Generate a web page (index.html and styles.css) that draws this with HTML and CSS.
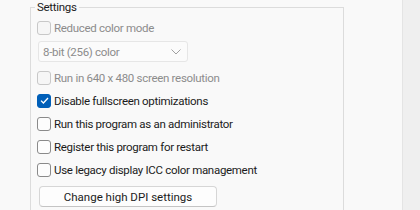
FILE: index.html
```html
<!DOCTYPE html>
<html lang="en">
<head>
  <meta charset="UTF-8">
  <title>Compatibility settings</title>
  <link rel="stylesheet" href="styles.css">
</head>
<body>
  <div class="page">
    <div class="main">
      <!-- Settings group -->
      <fieldset class="group">
        <legend>Settings</legend>

        <label class="check disabled">
          <span class="box"></span>
          <span>Reduced color mode</span>
        </label>

        <div class="select disabled">
          <span>8-bit (256) color</span>
          <svg class="chev" width="10" height="6" viewBox="0 0 10 6">
            <path d="M0.5 0.5 L5 5 L9.5 0.5" fill="none" stroke="#a0a0a0" stroke-width="1"/>
          </svg>
        </div>

        <label class="check disabled">
          <span class="box"></span>
          <span>Run in 640 x 480 screen resolution</span>
        </label>
        <label class="check">
          <span class="box checked">
            <svg width="9" height="7" viewBox="0 0 9 7">
              <path d="M1 3.6 L3.4 6 L8 1" fill="none" stroke="#fff" stroke-width="1.3"/>
            </svg>
          </span>
          <span>Disable fullscreen optimizations</span>
        </label>
        <label class="check">
          <span class="box"></span>
          <span>Run this program as an administrator</span>
        </label>
        <label class="check">
          <span class="box"></span>
          <span>Register this program for restart</span>
        </label>
        <label class="check">
          <span class="box"></span>
          <span>Use legacy display ICC color management</span>
        </label>

        <button class="btn">Change high DPI settings</button>
      </fieldset>
    </div>
    <div class="side"></div>
  </div>
</body>
</html>
```

FILE: styles.css
```css
body {
  margin: 0;
  font-family: Roboto, "Noto Sans", sans-serif;
  font-size: 11.5px;
  letter-spacing: -0.3px;
  color: #1b1b1b;
  background: #f9f9f9;
}

.page {
  display: flex;
  width: 420px;
  height: 210px;
  overflow: hidden;
}

.main {
  width: 402px;
  padding-left: 30px;
  box-sizing: border-box;
}

.side {
  flex: 1;
  background: #efefef;
  border-left: 1px solid #e4e4e4;
}

/* group box */
.group {
  width: 314px;
  box-sizing: border-box;
  margin: 0;
  padding: 1px 0 0 6px;
  border: 1px solid #dcdcdc;
  border-bottom: none;
  height: 230px;
  display: flex;
  flex-direction: column;
}

.group legend {
  padding: 0 2px;
  margin-left: -2px;
  line-height: 15px;
}

.check {
  display: flex;
  align-items: center;
  gap: 3px;
  height: 23px;
  flex-shrink: 0;
}

.check.disabled {
  color: #8c8c8c;
}

.box {
  width: 12px;
  height: 12px;
  border: 1px solid #8a8a8a;
  border-radius: 3px;
  background: #fdfdfd;
  display: flex;
  align-items: center;
  justify-content: center;
}

.disabled .box {
  border-color: #c8c8c8;
  background: #f6f6f6;
}

.box.checked {
  background: #005fb8;
  border-color: #005fb8;
}

.select {
  width: 150px;
  height: 21px;
  flex-shrink: 0;
  box-sizing: border-box;
  margin: 2px 0 4px 1px;
  border: 1px solid #e6e6e6;
  border-radius: 3px;
  background: #fbfbfb;
  display: flex;
  align-items: center;
  justify-content: space-between;
  padding: 0 6px 0 4px;
  color: #8c8c8c;
}

.btn {
  width: 178px;
  height: 21px;
  flex-shrink: 0;
  margin: 5px 0 0 2px;
  font: inherit;
  color: #1b1b1b;
  background: #fdfdfd;
  border: 1px solid #d6d6d6;
  border-bottom-color: #c4c4c4;
  border-radius: 4px;
}
```
